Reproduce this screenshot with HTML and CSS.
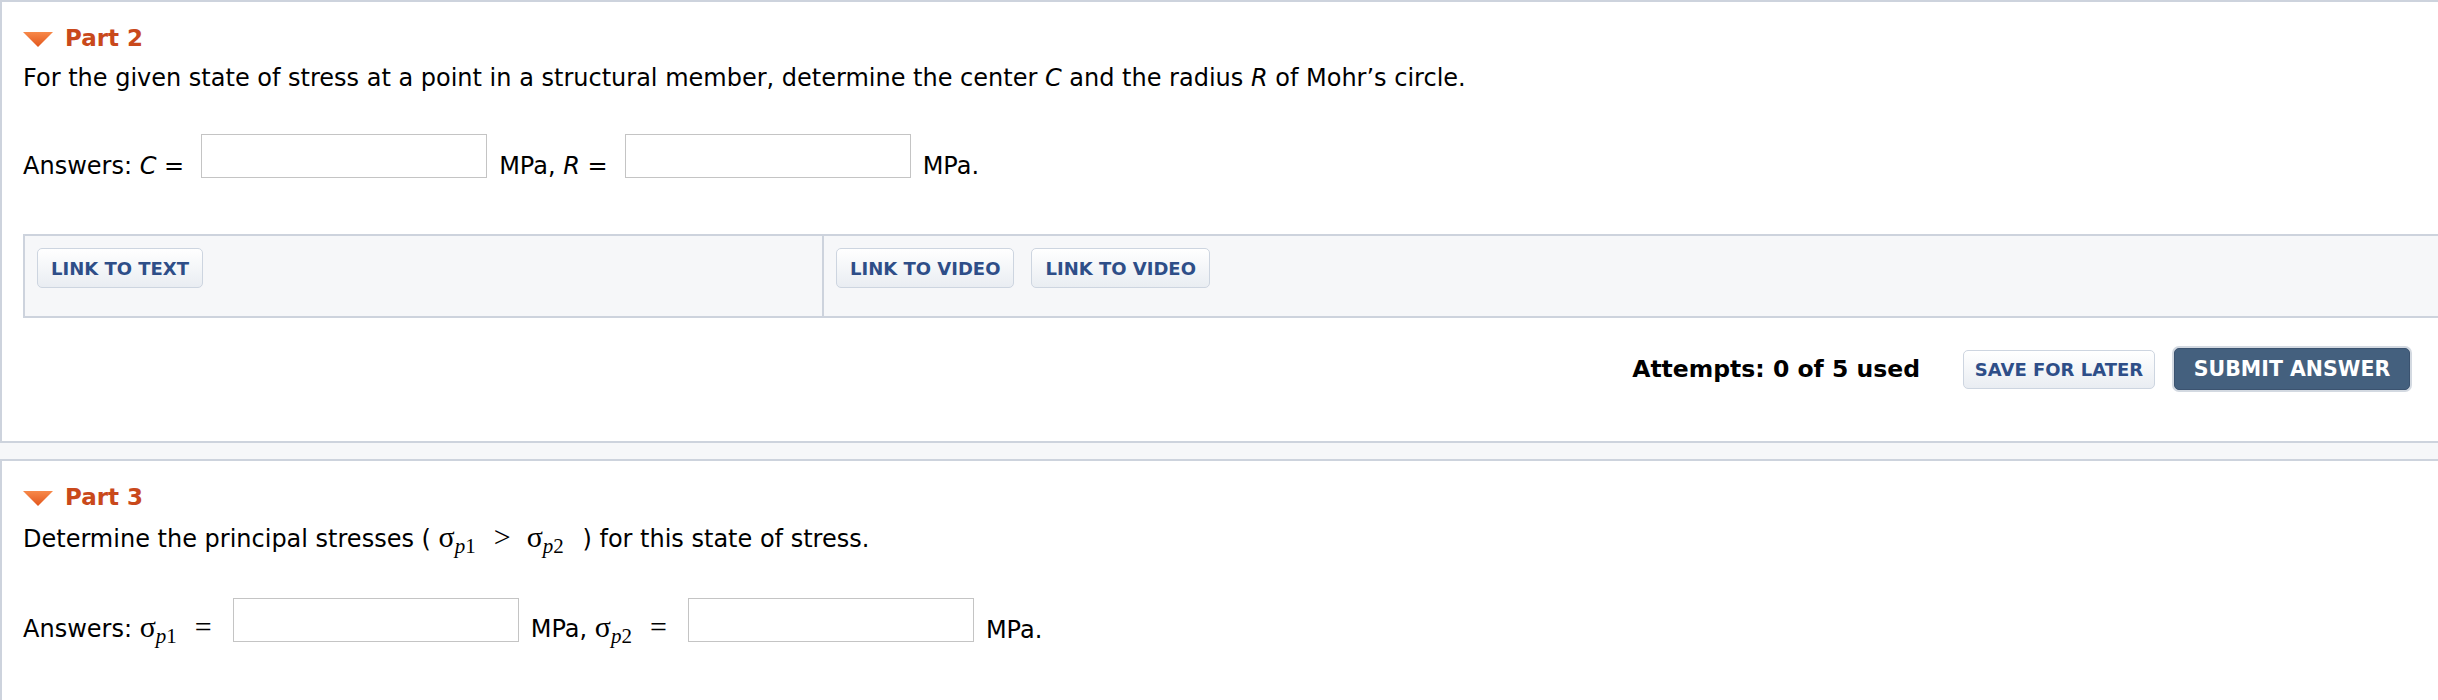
FILE: index.html
```html
<!DOCTYPE html>
<html lang="en">
<head>
<meta charset="utf-8">
<title>Mohr's circle</title>
<link rel="stylesheet" href="styles.css">
</head>
<body>
<section class="part">
  <h2 class="part-head">
    <svg class="caret" width="30" height="15" viewBox="0 0 30 15" aria-hidden="true">
      <defs>
        <linearGradient id="cg1" x1="0" y1="0" x2="0" y2="1">
          <stop offset="0" stop-color="#f7894a"/>
          <stop offset="1" stop-color="#e2561c"/>
        </linearGradient>
      </defs>
      <polygon points="0,0 30,0 15,15" fill="url(#cg1)"/>
    </svg>
    <span>Part 2</span>
  </h2>
  <p class="prompt">For the given state of stress at a point in a structural member, determine the center <i>C</i> and the radius <i>R</i> of Mohr’s circle.</p>
  <div class="answers">
    <span class="lbl">Answers: <i>C</i> =</span>
    <input class="ans" type="text">
    <span class="lbl">MPa, <i>R</i> =</span>
    <input class="ans" type="text">
    <span class="lbl">MPa.</span>
  </div>
  <div class="links">
    <div class="cell cell-text">
      <button class="btn">LINK TO TEXT</button>
    </div>
    <div class="cell cell-video">
      <button class="btn">LINK TO VIDEO</button>
      <button class="btn">LINK TO VIDEO</button>
    </div>
  </div>
  <div class="actions">
    <span class="attempts">Attempts: 0 of 5 used</span>
    <button class="btn btn-save">SAVE FOR LATER</button>
    <button class="btn btn-submit">SUBMIT ANSWER</button>
  </div>
</section>

<section class="part part-3">
  <h2 class="part-head">
    <svg class="caret" width="30" height="15" viewBox="0 0 30 15" aria-hidden="true">
      <defs>
        <linearGradient id="cg2" x1="0" y1="0" x2="0" y2="1">
          <stop offset="0" stop-color="#f7894a"/>
          <stop offset="1" stop-color="#e2561c"/>
        </linearGradient>
      </defs>
      <polygon points="0,0 30,0 15,15" fill="url(#cg2)"/>
    </svg>
    <span>Part 3</span>
  </h2>
  <p class="prompt">Determine the principal stresses ( <span class="m"><span class="sig">σ</span><span class="sub"><i>p</i>1</span><span class="rel">&gt;</span><span class="sig">σ</span><span class="sub sub-end"><i>p</i>2</span></span> ) for this state of stress.</p>
  <div class="answers answers-3">
    <span class="lbl">Answers: <span class="m"><span class="sig">σ</span><span class="sub"><i>p</i>1</span><span class="eq">=</span></span></span>
    <input class="ans" type="text">
    <span class="lbl">MPa, <span class="m"><span class="sig">σ</span><span class="sub"><i>p</i>2</span><span class="eq">=</span></span></span>
    <input class="ans" type="text">
    <span class="lbl">MPa.</span>
  </div>
</section>
</body>
</html>
```

FILE: styles.css
```css
html, body {
  margin: 0;
  padding: 0;
}
body {
  background: #f6f7f9;
  overflow: hidden;
  font-family: "DejaVu Sans", sans-serif;
  color: #000;
}
.part {
  box-sizing: border-box;
  width: 2480px;
  background: #fff;
  border: 2px solid #cdd3dd;
  padding: 22px 22px 51px 21px;
}
.part-3 {
  margin-top: 16px;
  padding-bottom: 80px;
}
.part-head {
  display: flex;
  align-items: flex-start;
  gap: 12px;
  margin: 0;
  font-family: "DejaVu Sans", sans-serif;
  font-weight: bold;
  font-size: 23px;
  line-height: 28px;
  color: #c9491b;
}
.caret {
  margin-top: 8px;
  display: block;
}
.prompt {
  margin: 12px 0 0 0;
  font-size: 24px;
  line-height: 28px;
}
.answers {
  display: flex;
  align-items: flex-end;
  margin-top: 42px;
  font-size: 24px;
}
.answers-3 {
  margin-top: 44px;
}
.lbl {
  line-height: 24px;
  white-space: pre;
}
.ans {
  box-sizing: border-box;
  width: 286px;
  height: 44px;
  border: 1px solid #c4c4c4;
  background: #fff;
  margin: 0 12px 0 17px;
  padding: 0;
  outline: none;
}
.answers-3 .ans {
  margin-left: 21px;
}
.m {
  font-family: "Liberation Serif", serif;
  font-size: 30px;
  white-space: nowrap;
}
.sub {
  font-size: 21px;
  position: relative;
  top: 6px;
}
.sub-end {
  margin-right: 11px;
}
.rel {
  margin: 0 16px 0 18px;
}
.eq {
  margin-left: 18px;
}
.links {
  display: flex;
  margin-top: 56px;
  height: 84px;
  box-sizing: border-box;
  border: 2px solid #cdd3dd;
  background: #f6f7f9;
}
.cell {
  display: flex;
  align-items: flex-start;
  gap: 17px;
  padding: 12px;
}
.cell-text {
  width: 799px;
  box-sizing: border-box;
  border-right: 2px solid #cdd3dd;
}
.btn {
  box-sizing: border-box;
  height: 40px;
  padding: 0 13px;
  border: 1px solid #cdd5e0;
  border-radius: 5px;
  background: linear-gradient(#ffffff, #e9edf2);
  font-family: "DejaVu Sans", sans-serif;
  font-weight: bold;
  font-size: 18px;
  color: #2e4e88;
  cursor: pointer;
}
.actions {
  display: flex;
  align-items: center;
  justify-content: flex-end;
  margin-top: 30px;
  padding-right: 46px;
}
.attempts {
  font-family: "DejaVu Sans", sans-serif;
  font-weight: bold;
  font-size: 23.5px;
  margin-right: 43px;
}
.btn-save {
  width: 192px;
  height: 39px;
  padding: 0;
}
.btn-submit {
  width: 236px;
  height: 42px;
  padding: 0;
  margin-left: 19px;
  border: 1px solid #3b5370;
  background: #44607e;
  color: #fff;
  font-size: 20.5px;
  box-shadow: 0 0 0 2px #d3d9e1;
}
```
